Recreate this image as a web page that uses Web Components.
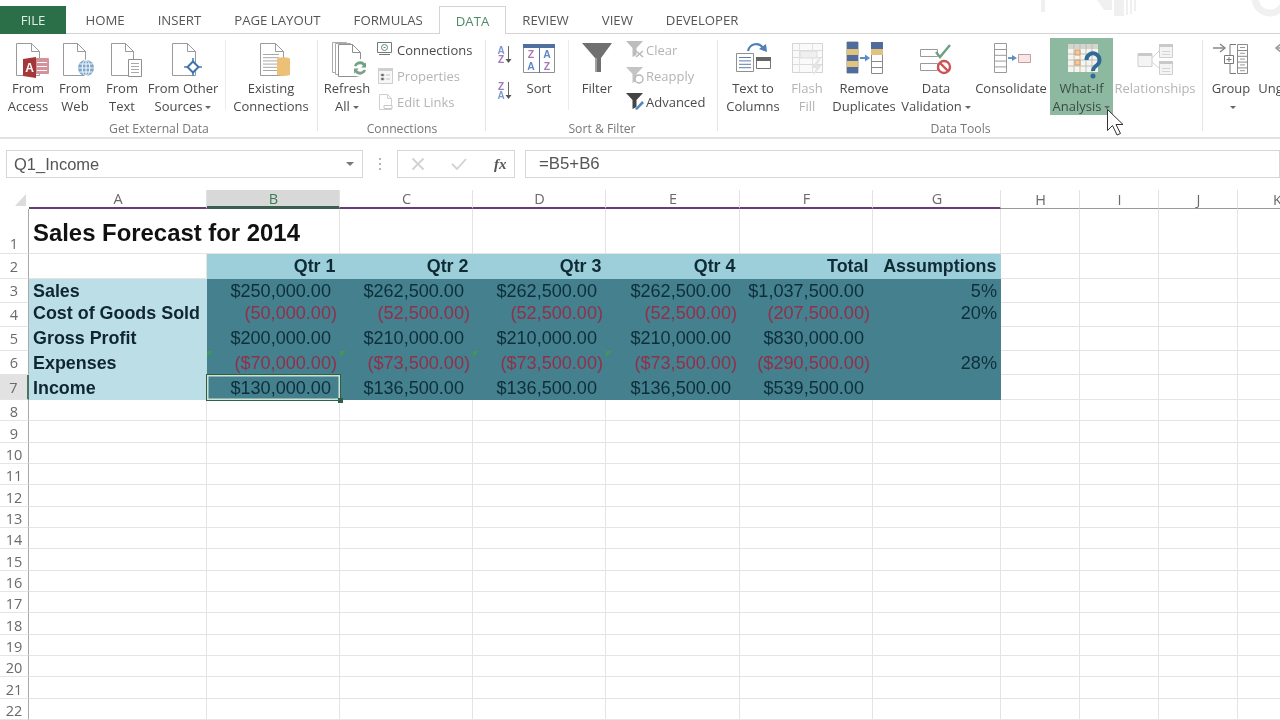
<!DOCTYPE html>
<html>
<head>
<meta charset="utf-8">
<title>Sales Forecast</title>
<style>
  html, body { margin: 0; height: 100%; background: #fff; overflow: hidden; }
</style>
</head>
<body>
<xl-app>
  <xl-tabs></xl-tabs>
  <xl-ribbon>
    <xl-group label="Get External Data" w="318" pad="4">
      <xl-btn icon="access" w="48">From<br>Access</xl-btn>
      <xl-btn icon="web" w="46">From<br>Web</xl-btn>
      <xl-btn icon="text" w="48">From<br>Text</xl-btn>
      <xl-btn icon="other" w="74" caret>From Other<br>Sources</xl-btn>
      <xl-sep w="6" end></xl-sep>
      <xl-btn icon="existing" w="90">Existing<br>Connections</xl-btn>
    </xl-group>
    <xl-group label="Connections" w="168" pad="4">
      <xl-btn icon="refresh" w="50" caret>Refresh<br>All</xl-btn>
      <xl-stack left="4">
        <xl-small icon="conn">Connections</xl-small>
        <xl-small icon="props" disabled>Properties</xl-small>
        <xl-small icon="links" disabled>Edit Links</xl-small>
      </xl-stack>
    </xl-group>
    <xl-group label="Sort &amp; Filter" w="232" pad="4">
      <xl-stack left="0">
        <xl-small icon="az" wide></xl-small>
        <xl-small icon="za" wide></xl-small>
      </xl-stack>
      <xl-btn icon="sort" w="42">Sort</xl-btn>
      <xl-sep w="16"></xl-sep>
      <xl-btn icon="filter" w="42">Filter</xl-btn>
      <xl-stack left="7">
        <xl-small icon="clear" disabled>Clear</xl-small>
        <xl-small icon="reapply" disabled>Reapply</xl-small>
        <xl-small icon="advanced">Advanced</xl-small>
      </xl-stack>
    </xl-group>
    <xl-group label="Data Tools" w="485" pad="5">
      <xl-btn icon="t2c" w="60">Text to<br>Columns</xl-btn>
      <xl-btn icon="flash" w="48" disabled>Flash<br>Fill</xl-btn>
      <xl-btn icon="dupes" w="66">Remove<br>Duplicates</xl-btn>
      <xl-btn icon="valid" w="78" caret>Data<br>Validation</xl-btn>
      <xl-btn icon="consol" w="72">Consolidate</xl-btn>
      <xl-sep w="3" plain></xl-sep>
      <xl-btn icon="whatif" w="63" caret active>What-If<br>Analysis</xl-btn>
      <xl-btn icon="rel" w="84" disabled>Relationships</xl-btn>
    </xl-group>
    <xl-group w="90" pad="4" last>
      <xl-btn icon="group" w="48" caret>Group<br></xl-btn>
      <xl-btn icon="ungroup" w="60" caret>Ungroup<br></xl-btn>
    </xl-group>
  </xl-ribbon>
  <xl-formula-bar name="Q1_Income" formula="=B5+B6"></xl-formula-bar>
  <xl-sheet></xl-sheet>
  <xl-cursor></xl-cursor>
</xl-app>

<script>
const UI_FONT = `"Open Sans", "Noto Sans", sans-serif`;
const CELL_FONT = `"Liberation Sans", Arial, sans-serif`;

// page icon with the folded corner, used all over the first groups
const doc = (x, y, w, h, c = '#9a9a9a', f = 8) =>
  `<path d="M${x} ${y}h${w - f}l${f} ${f}v${h - f}h${-w}z" fill="#fff" stroke="${c}"/>` +
  `<path d="M${x + w - f} ${y}v${f}h${f}" fill="none" stroke="${c}"/>`;

const lines = (x, y, w, n, step, c = '#a8a8a8') => {
  let out = '';
  for (let i = 0; i < n; i++) out += `<path d="M${x} ${y + i * step + .5}h${w}" stroke="${c}"/>`;
  return out;
};

const funnel = (c) => `<path d="M1 1h17l-6.5 7v7l-4 2v-9z" fill="${c}"/>`;

const ICONS = {
  access: doc(10.5, 5.5, 23, 32) +
    `<path d="M29 20h13a1 1 0 0 1 1 1v14a1 1 0 0 1-1 1H29z" fill="#d6929b"/>` +
    lines(31, 24, 10, 3, 4, '#fff') +
    `<path d="M17 21l13-2v21l-13-2z" fill="#a4373a"/>` +
    `<text x="23.5" y="34" font-family="Liberation Sans" font-weight="700" font-size="12" text-anchor="middle" fill="#fff">A</text>`,
  web: doc(10.5, 5.5, 22, 32) +
    `<circle cx="33" cy="30" r="8" fill="#7ea6cb"/>` +
    `<path d="M25 30h16M33 22v16M26.5 26h13M26.5 34h13" stroke="#fff" stroke-width=".9"/>` +
    `<ellipse cx="33" cy="30" rx="3.8" ry="8" fill="none" stroke="#fff" stroke-width=".9"/>`,
  text: doc(11.5, 5.5, 22, 32) +
    `<path d="M28.5 21.5h13v17h-13z" fill="#fff" stroke="#8f8f8f"/>` + lines(31, 25, 8, 4, 3),
  other: doc(11.5, 5.5, 23, 32) +
    `<path d="M32 20v18M23 29h18" stroke="#4f7fb5" stroke-width="1.6"/>` +
    `<path d="M32 23.5l5.5 5.5-5.5 5.5-5.5-5.5z" fill="#fff" stroke="#3f73ad" stroke-width="2"/>`,
  existing: doc(11.5, 5.5, 23, 32) + lines(14, 16, 16, 6, 3.2) +
    `<path d="M28 20.5q6.5-2.5 13 0V37q-6.5 2-13 0z" fill="#ecc177"/>`,
  refresh:
    `<path d="M7.5 4.5h14v30h-14z" fill="#fff" stroke="#aaa"/><path d="M10.5 5.5h15v31h-15z" fill="#fff" stroke="#aaa"/>` +
    doc(13.5, 6.5, 22, 32, '#8f8f8f') +
    `<circle cx="35" cy="30" r="9" fill="#fff"/>` +
    `<path d="M29 28a6.5 6.5 0 0 1 11-2.5l1-1v5h-5l2-1.8a4 4 0 0 0-6.5 .6z" fill="#6fa383"/>` +
    `<path d="M41 32a6.5 6.5 0 0 1-11 2.5l-1 1v-5h5l-2 1.8a4 4 0 0 0 6.5-.6z" fill="#7f9f8d"/>`,
  sort:
    `<path d="M6.5 6.5h31v28h-31z" fill="#fff" stroke="#8f8f8f"/><path d="M6 6h32v4H6zM22 10h1v25h-1z" fill="#4f6f9f"/>` +
    `<g font-family="Liberation Sans" font-size="10.4" font-weight="700" text-anchor="middle">` +
    `<text x="14" y="20" fill="#a777b5">Z</text><text x="30" y="20" fill="#5f86c6">A</text>` +
    `<text x="14" y="32" fill="#5f86c6">A</text><text x="30" y="32" fill="#a777b5">Z</text></g>`,
  filter:
    `<path d="M7 5h30L26 20v14h-6V20z" fill="#707070"/><path d="M20 20h2v14h-2z" fill="#a0a0a0"/>`,
  t2c:
    `<path d="M5.5 15.5h17v18h-17z" fill="#fff" stroke="#8f8f8f"/>` + lines(8, 19, 12, 4, 3.4, '#5d7ea8') +
    `<path d="M25.5 19.5h14v11h-14z" fill="#fff" stroke="#777"/><path d="M25 19h15v4H25z" fill="#666"/>` +
    `<path d="M17 13c2-8 11-9 15-3" fill="none" stroke="#4f80b8" stroke-width="2.2"/><path d="M28 11l8 3-1-8z" fill="#4f80b8"/>`,
  flash:
    `<path d="M7.5 5.5h30v29h-30z" fill="#fafafa" stroke="#d4d4d4"/>` + lines(8, 12, 29, 3, 7, '#dcdcdc') +
    `<path d="M14.5 6v28M27.5 6v28" stroke="#e2e2e2"/>` +
    `<path d="M15 13h17v7H15z" fill="#efefef" stroke="#dcdcdc"/><path d="M34 20l-8 10h5l-3 8 9-11h-5l4-7z" fill="#e4e4e4"/>`,
  dupes:
    `<path d="M5 4h11v31H5z" fill="#fff" stroke="#8a8a8a"/><path d="M5 4h11v7H5zM5 17h11v6H5zM5 29h11v6H5z" fill="#4e6d9e"/>` +
    `<path d="M5 11h11v6H5zM5 23h11v6H5z" fill="#e3c27c"/>` +
    `<path d="M18 20h6" stroke="#5a8ec4" stroke-width="2"/><path d="M23 16.5l5 3.5-5 3.5z" fill="#5a8ec4"/>` +
    `<path d="M29.5 4.5h11v31h-11z" fill="#fff" stroke="#8a8a8a"/><path d="M29 4h12v7H29z" fill="#4e6d9e"/><path d="M29 11h12v6H29z" fill="#e3c27c"/>` +
    lines(30, 23, 10, 2, 6, '#8a8a8a'),
  valid:
    `<path d="M6.5 11.5h17v7h-17zM6.5 25.5h17v7h-17z" fill="#fff" stroke="#9a9a9a"/>` +
    `<path d="M22 14l4 5 10-12" fill="none" stroke="#6f9f82" stroke-width="2.4"/>` +
    `<circle cx="30" cy="29" r="6" fill="#fff" stroke="#cf5252" stroke-width="2.4"/><path d="M26 25l8 8" stroke="#cf5252" stroke-width="2.4"/>`,
  consol:
    `<path d="M5.5 5.5h12v29h-12z" fill="#fff" stroke="#9a9a9a"/>` + lines(6, 11, 11, 4, 5.8, '#9a9a9a') +
    `<path d="M19 20h5" stroke="#5a8ec4" stroke-width="1.8"/><path d="M23 17l5 3-5 3z" fill="#5a8ec4"/>` +
    `<path d="M29.5 16.5h12v8h-12z" fill="#f5e8e8" stroke="#cc9a9a"/>`,
  whatif:
    `<path d="M8 6h30v28H8z" fill="#f6f4ee"/><path d="M8 6h30v5H8z" fill="#d5d5d0"/>` +
    `<path d="M14 6v28M20 6v28M26 6v28M32 6v28M8 16h30M8 22h30M8 28h30" stroke="#aeb8b0" stroke-width=".8"/>` +
    `<path d="M15 12h5v5h-5zM15 22h5v5h-5z" fill="#f3c9a0" stroke="#d79a62"/>` +
    `<path d="M26.5 22a6.5 6.5 0 1 1 10.5 5c-2.5 1.8-4 3-4 6" fill="none" stroke="#2f6b96" stroke-width="4"/>` +
    `<circle cx="33" cy="38" r="2.5" fill="#2f6b96"/>`,
  rel:
    `<path d="M5 15.5h14v13H5zM26.5 6.5h13v13h-13zM26.5 23.5h13v13h-13z" fill="#f4f4f4" stroke="#cfcfcf"/>` +
    `<path d="M5 15h14v3H5zM26 6h14v3H26zM26 23h14v3H26z" fill="#c9c9c9"/>` +
    `<path d="M19 20l7-7M19 24l7 6" stroke="#d4d4d4"/>` + lines(29, 13, 8, 2, 3, '#d4d4d4') + lines(29, 30, 8, 2, 3, '#d4d4d4'),
  group:
    `<path d="M4 10h11" stroke="#888" stroke-width="1.5"/><path d="M11 6l5 4-5 4" fill="none" stroke="#888" stroke-width="1.5"/>` +
    `<path d="M27 6.5h-6v12M21 26v9.5h6" fill="none" stroke="#777"/>` +
    `<path d="M15.5 17.5h9v8h-9z" fill="#fff" stroke="#777"/><path d="M17.5 21.5h5M20 19v5" stroke="#777"/>` +
    `<path d="M28.5 6.5h10v29h-10z" fill="#fff" stroke="#8a8a8a"/>` + lines(29, 12, 9, 4, 5.8, '#8a8a8a') +
    lines(31, 9, 5, 5, 5.8, '#999'),
  ungroup:
    `<path d="M14 10h11" stroke="#999" stroke-width="1.5"/><path d="M18 6l-5 4 5 4" fill="none" stroke="#999" stroke-width="1.5"/>` +
    `<path d="M26 6.5h6v12M32 26v9.5h-6" fill="none" stroke="#888"/>` +
    `<path d="M22.5 17.5h9v8h-9z" fill="#fff" stroke="#c07a7a"/>` +
    `<path d="M34.5 6.5h10v29h-10z" fill="#fff" stroke="#8a8a8a"/>`,
  // small 19x20 icons for the stacked commands
  conn:
    `<path d="M1.5 2.5h14v10h-14z" fill="#fff" stroke="#777"/><path d="M3 14.5h11" stroke="#777"/>` +
    `<circle cx="8.5" cy="7.5" r="3" fill="#fff" stroke="#5a8a70"/><path d="M7.5 7.5h2" stroke="#5a8a70"/>`,
  props:
    `<path d="M2.5 2.5h14v15h-14z" fill="#f7f7f7" stroke="#cdcdcd"/><path d="M2 2h15v3H2z" fill="#cfcfcf"/>` +
    `<path d="M5 8h3v2H5zM5 12h3v2H5zM10 9h4M10 13h4" stroke="#c4c4c4"/>`,
  links: doc(3.5, 2.5, 12, 15, '#cfcfcf', 4) +
    `<path d="M8 13.5h8v3H8z" fill="#fff" stroke="#c8c8c8"/>`,
  az:
    `<g font-family="Liberation Sans" font-size="10" font-weight="700" text-anchor="middle">` +
    `<text x="5" y="9" fill="#7c9ad0">A</text><text x="5" y="18" fill="#a07ab8">Z</text></g>` +
    `<path d="M12.5 1v15" stroke="#666"/><path d="M9.5 14h6l-3 4z" fill="#555"/>`,
  za:
    `<g font-family="Liberation Sans" font-size="10" font-weight="700" text-anchor="middle">` +
    `<text x="5" y="9" fill="#a07ab8">Z</text><text x="5" y="18" fill="#7c9ad0">A</text></g>` +
    `<path d="M12.5 1v15" stroke="#666"/><path d="M9.5 14h6l-3 4z" fill="#555"/>`,
  clear: funnel('#bdbdbd') + `<path d="M11 11l7 6M18 11l-7 6" stroke="#b8b8b8" stroke-width="1.5"/>`,
  reapply: funnel('#c4c4c4') + `<circle cx="14" cy="13" r="4" fill="#fff" stroke="#b4b4b4" stroke-width="1.4"/>`,
  advanced: funnel('#444') + `<path d="M10 17l7-8 2 2-7 7z" fill="#4f86bf"/>`,
};

const svgIcon = (name, w, h) =>
  `<svg width="${w}" height="${h}" viewBox="0 0 ${w} ${h}" xmlns="http://www.w3.org/2000/svg">${ICONS[name] || ''}</svg>`;

const appTemplate = document.createElement('template');
appTemplate.innerHTML = `
  <style>
    :host {
      display: block;
      position: relative;
      width: 1280px;
      height: 720px;
      overflow: hidden;
      background: #fff;
      filter: blur(.35px);
    }
  </style>
  <slot></slot>
`;

class XlApp extends HTMLElement {
  constructor() {
    super();
    this.attachShadow({ mode: 'open' }).appendChild(appTemplate.content.cloneNode(true));
  }
}

const tabsTemplate = document.createElement('template');
tabsTemplate.innerHTML = `
  <style>
    :host {
      display: flex;
      position: relative;
      height: 34px;
      box-sizing: border-box;
      padding-top: 6px;
      border-bottom: 1px solid #d4d4d4;
      font: 13.2px ${UI_FONT};
      color: #555;
    }
    .file {
      width: 66px;
      margin-right: 3px;
      height: 28px;
      background: #2a6f48;
      color: #dfeee5;
      display: flex;
      align-items: center;
      justify-content: center;
    }
    .tab {
      padding: 0 16.5px;
      height: 28px;
      display: flex;
      align-items: center;
      box-sizing: border-box;
    }
    .on {
      background: #fff;
      border: 1px solid #d4d4d4;
      border-bottom: 0;
      color: #4f8a68;
      padding: 0 15.5px;
    }
    .mark { position: absolute; left: 1030px; top: 0; }
  </style>
  <div class="file">FILE</div>
  <div class="tab">HOME</div>
  <div class="tab">INSERT</div>
  <div class="tab">PAGE LAYOUT</div>
  <div class="tab">FORMULAS</div>
  <div class="tab on">DATA</div>
  <div class="tab">REVIEW</div>
  <div class="tab">VIEW</div>
  <div class="tab">DEVELOPER</div>
  <svg class="mark" width="250" height="24" viewBox="0 0 250 24">
    <path d="M11 0h4v12h-4zM67 0h15v10l-8 0zM84 0h10v16H84zM96 0h2v15h-2zM100 0h2v14h-2zM104 0h2v11h-2z" fill="#f0f0f0"/>
    <circle cx="240" cy="-2" r="15" fill="none" stroke="#f0f0f0" stroke-width="7"/>
  </svg>
`;

class XlTabs extends HTMLElement {
  constructor() {
    super();
    this.attachShadow({ mode: 'open' }).appendChild(tabsTemplate.content.cloneNode(true));
  }
}

const ribbonTemplate = document.createElement('template');
ribbonTemplate.innerHTML = `
  <style>
    :host {
      display: flex;
      height: 105px;
      box-sizing: border-box;
      border-bottom: 2px solid #e2e2e2;
      overflow: hidden;
      font: 13px/18px ${UI_FONT};
      color: #4a4a4a;
    }
  </style>
  <slot></slot>
`;

class XlRibbon extends HTMLElement {
  constructor() {
    super();
    this.attachShadow({ mode: 'open' }).appendChild(ribbonTemplate.content.cloneNode(true));
  }
}

class XlGroup extends HTMLElement {
  constructor() {
    super();
    const w = this.getAttribute('w');
    const pad = this.getAttribute('pad') || 0;
    const sepLine = this.hasAttribute('last') ? '' : `
      .sep { position: absolute; right: 0; top: 6px; bottom: 6px; width: 1px; background: #e6e6e6; }`;
    this.attachShadow({ mode: 'open' }).innerHTML = `
      <style>
        :host {
          display: flex;
          flex: none;
          flex-direction: column;
          position: relative;
          width: ${w}px;
          box-sizing: border-box;
          padding: 4px 0 0 ${pad}px;
        }
        .row { display: flex; height: 77px; }
        .label {
          height: 22px;
          margin-left: -${pad}px;
          text-align: center;
          font-size: 12.2px;
          line-height: 28px;
          color: #777;
        }
        ${sepLine}
      </style>
      <div class="row"><slot></slot></div>
      <div class="label">${(this.getAttribute('label') || '').replace('&', '&amp;')}</div>
      <div class="sep"></div>
    `;
  }
}

class XlBtn extends HTMLElement {
  constructor() {
    super();
    const w = this.getAttribute('w');
    const caret = this.hasAttribute('caret') ? '<span class="caret"></span>' : '';
    this.attachShadow({ mode: 'open' }).innerHTML = `
      <style>
        :host {
          display: block;
          flex: none;
          width: ${w}px;
          height: 77px;
          text-align: center;
          white-space: nowrap;
        }
        :host([disabled]) { color: #b4b4b4; }
        :host([active]) { background: #8db9a1; color: #3c4a42; }
        .ico { height: 41px; display: flex; justify-content: center; }
        .ico svg { flex: none; }
        .caret {
          display: inline-block;
          width: 0;
          height: 0;
          margin-left: 3px;
          vertical-align: 2px;
          border: 3px solid transparent;
          border-top-color: #666;
          border-bottom: 0;
        }
      </style>
      <div class="ico">${svgIcon(this.getAttribute('icon'), 44, 41)}</div>
      <div><slot></slot>${caret}</div>
    `;
  }
}

class XlSmall extends HTMLElement {
  constructor() {
    super();
    this.attachShadow({ mode: 'open' }).innerHTML = `
      <style>
        :host {
          display: flex;
          align-items: center;
          height: 26px;
          white-space: nowrap;
        }
        :host([wide]) { width: 28px; height: 36px; box-sizing: border-box; padding-left: 6px; }
        :host([disabled]) { color: #b4b4b4; }
        svg { flex: none; margin-right: 2px; }
      </style>
      ${svgIcon(this.getAttribute('icon'), 19, 20)}<slot></slot>
    `;
  }
}

class XlStack extends HTMLElement {
  constructor() {
    super();
    this.attachShadow({ mode: 'open' }).innerHTML = `
      <style>
        :host {
          display: flex;
          flex: none;
          flex-direction: column;
          margin-top: -1px;
          margin-left: ${this.getAttribute('left') || 0}px;
        }
      </style>
      <slot></slot>
    `;
  }
}

class XlSep extends HTMLElement {
  constructor() {
    super();
    const line = this.hasAttribute('plain') ? 'transparent' : '#ececec';
    const margin = this.hasAttribute('end') ? '2px 0 0 auto' : '2px auto 0';
    this.attachShadow({ mode: 'open' }).innerHTML = `
      <style>
        :host { display: block; flex: none; width: ${this.getAttribute('w')}px; }
        div { width: 1px; height: 70px; margin: ${margin}; background: ${line}; }
      </style>
      <div></div>
    `;
  }
}

const formulaTemplate = document.createElement('template');
formulaTemplate.innerHTML = `
  <style>
    :host {
      display: flex;
      height: 51px;
      box-sizing: border-box;
      padding: 11px 0 12px 6px;
      font: 16.5px ${CELL_FONT};
      color: #555;
    }
    .box {
      box-sizing: border-box;
      height: 28px;
      border: 1px solid #d6d6d6;
      display: flex;
      align-items: center;
      flex: none;
    }
    .name { width: 357px; padding: 0 8px 0 7px; justify-content: space-between; }
    .drop { width: 0; height: 0; border: 4px solid transparent; border-top-color: #777; border-bottom: 0; }
    .dots { width: 34px; flex: none; display: flex; flex-direction: column; align-items: center; justify-content: center; gap: 3px; }
    .dots i { width: 2px; height: 2px; background: #b5b5b5; }
    .btns { width: 118px; padding-left: 12px; gap: 24px; }
    .value { width: 755px; margin-left: 10px; padding-left: 13px; font-size: 16.8px; }
    svg { display: block; flex: none; }
    .fx { font: italic 700 15px "Liberation Serif", serif; color: #555; margin-left: 2px; }
  </style>
  <div class="box name"><span id="name"></span><span class="drop"></span></div>
  <div class="dots"><i></i><i></i><i></i></div>
  <div class="box btns">
    <svg width="16" height="16" viewBox="0 0 16 16"><path d="M2.5 2.5l11 11M13.5 2.5l-11 11" stroke="#d2d2d2" stroke-width="1.8"/></svg>
    <svg width="18" height="16" viewBox="0 0 18 16"><path d="M2 8l5 5 9-10" fill="none" stroke="#d2d2d2" stroke-width="1.8"/></svg>
    <span class="fx">fx</span>
  </div>
  <div class="box value" id="value"></div>
`;

class XlFormulaBar extends HTMLElement {
  constructor() {
    super();
    this._shadowRoot = this.attachShadow({ mode: 'open' });
    this._shadowRoot.appendChild(formulaTemplate.content.cloneNode(true));
  }

  connectedCallback() {
    this._shadowRoot.querySelector('#name').textContent = this.getAttribute('name');
    this._shadowRoot.querySelector('#value').textContent = this.getAttribute('formula');
  }
}

const sheetTemplate = document.createElement('template');
sheetTemplate.innerHTML = `
  <style>
    :host {
      display: block;
      height: 530px;
      overflow: hidden;
      font: 18.1px ${CELL_FONT};
      color: #111;
    }
    .grid {
      display: grid;
      grid-template-columns: 29px 178px 133px 133px 133px 134px 133px 128px 79px 79px 79px 79px;
      grid-template-rows: 19px 45px 25px 24px 24px 24px 24px 25px repeat(15, 21.35px);
    }
    .c {
      box-sizing: border-box;
      border-right: 1px solid #e4e4e4;
      border-bottom: 1px solid #e4e4e4;
      display: flex;
      align-items: center;
      white-space: nowrap;
      position: relative;
      min-width: 0;
    }
    .col, .row {
      font: 14.5px ${UI_FONT};
      color: #6a6a6a;
      justify-content: center;
    }
    .col { border-right-color: #e2e2e2; border-bottom: 1px solid #9a9a9a; padding-left: 1px; line-height: 15px; }
    .col.used { border-bottom: 2px solid #6d3a78; }
    .col.sel { background: #d8d8d8; color: #3d7a5a; border-bottom: 3px solid #3a5f50; line-height: 15px; }
    .corner { border-bottom: 0; border-right: 0; justify-content: flex-end; padding-right: 3px; }
    .row { border-right: 1px solid #a8a8a8; }
    .row.first { align-items: flex-end; }
    .row.low { padding-top: 4px; line-height: 16px; }
    .row.sel { background: #e2e2e2; border-right: 2px solid #4f7361; }
    .title { grid-column: span 2; font-weight: 700; font-size: 23.9px; padding: 3px 0 0 4px; }
    .head { background: #9dcfda; border: 0; font-weight: 700; font-size: 17.9px; justify-content: flex-end; padding-right: 4.5px; color: #0f2c36; }
    .label { background: #bbdee7; border: 0; font-weight: 700; font-size: 17.9px; padding-left: 4px; color: #0f2630; }
    .num { background: #44808e; border: 0; justify-content: flex-end; color: #0e2f3a; padding-right: 9px; }
    .neg { color: #90304a; padding-right: 3px; }
    .pct { padding-right: 4px; }
    .r4 { padding-bottom: 3px; }
    .r5 { padding-bottom: 1px; }
    .r7 { padding-top: 1px; }
    .warn::before {
      content: '';
      position: absolute;
      left: 0;
      top: 0;
      border-top: 6px solid #3d9a55;
      border-right: 6px solid transparent;
    }
    .active {
      z-index: 1;
      box-shadow: 0 0 0 1px #2f6045, inset 0 0 0 1.5px #cfe3d4;
    }
    .active::after {
      content: '';
      position: absolute;
      right: -3px;
      bottom: -3px;
      width: 5px;
      height: 5px;
      background: #2f6045;
    }
  </style>
  <div class="grid"></div>
`;

const COLS = ['A', 'B', 'C', 'D', 'E', 'F', 'G', 'H', 'I', 'J', 'K'];
const DATA = {
  2: ['', 'Qtr 1', 'Qtr 2', 'Qtr 3', 'Qtr 4', 'Total', 'Assumptions'],
  3: ['Sales', '$250,000.00', '$262,500.00', '$262,500.00', '$262,500.00', '$1,037,500.00', '5%'],
  4: ['Cost of Goods Sold', '(50,000.00)', '(52,500.00)', '(52,500.00)', '(52,500.00)', '(207,500.00)', '20%'],
  5: ['Gross Profit', '$200,000.00', '$210,000.00', '$210,000.00', '$210,000.00', '$830,000.00', ''],
  6: ['Expenses', '($70,000.00)', '($73,500.00)', '($73,500.00)', '($73,500.00)', '($290,500.00)', '28%'],
  7: ['Income', '$130,000.00', '$136,500.00', '$136,500.00', '$136,500.00', '$539,500.00', ''],
};

class XlSheet extends HTMLElement {
  constructor() {
    super();
    this._shadowRoot = this.attachShadow({ mode: 'open' });
    this._shadowRoot.appendChild(sheetTemplate.content.cloneNode(true));
    this.$grid = this._shadowRoot.querySelector('.grid');
  }

  connectedCallback() {
    this._cell('c corner', '<svg width="11" height="12"><path d="M11 0v12H0z" fill="#dcdcdc"/></svg>', true);
    COLS.forEach((name, i) => {
      let cls = 'c col';
      if (i < 7) cls += ' used';
      if (name === 'B') cls += ' sel';
      this._cell(cls, name);
    });
    for (let r = 1; r <= 22; r++) this._row(r);
  }

  _row(r) {
    let rowCls = 'c row';
    if (r === 1) rowCls += ' first';
    if (r === 7) rowCls += ' sel';
    if (r > 7) rowCls += ' low';
    this._cell(rowCls, r);

    if (r === 1) {
      this._cell('c title', 'Sales Forecast for 2014');
      for (let i = 2; i < COLS.length; i++) this._cell('c');
      return;
    }
    COLS.forEach((_, i) => {
      const value = DATA[r] ? DATA[r][i] : undefined;
      if (value === undefined) {
        this._cell('c');
      } else if (r === 2) {
        this._cell(i === 0 ? 'c' : 'c head', value);
      } else if (i === 0) {
        this._cell(`c label r${r}`, value);
      } else {
        let cls = `c num r${r}`;
        if (value.startsWith('(')) cls += ' neg';
        if (i === 6) cls += ' pct';
        if (r === 6 && i < 5) cls += ' warn';
        if (r === 7 && i === 1) cls += ' active';
        this._cell(cls, value);
      }
    });
  }

  _cell(cls, content = '', html = false) {
    const el = document.createElement('div');
    el.className = cls;
    if (html) el.innerHTML = content;
    else el.textContent = content;
    this.$grid.appendChild(el);
  }
}

class XlCursor extends HTMLElement {
  constructor() {
    super();
    this.attachShadow({ mode: 'open' }).innerHTML = `
      <style>
        :host { position: absolute; left: 1107px; top: 109px; display: block; width: 18px; height: 27px; }
      </style>
      <svg width="18" height="27" viewBox="0 0 18 27">
        <path d="M.5 .5v21l5-5 4.5 9.5 3.5-1.5-4.5-9h7z" fill="#fff" stroke="#333" stroke-width="1"/>
      </svg>
    `;
  }
}

customElements.define('xl-app', XlApp);
customElements.define('xl-tabs', XlTabs);
customElements.define('xl-ribbon', XlRibbon);
customElements.define('xl-group', XlGroup);
customElements.define('xl-btn', XlBtn);
customElements.define('xl-small', XlSmall);
customElements.define('xl-stack', XlStack);
customElements.define('xl-sep', XlSep);
customElements.define('xl-formula-bar', XlFormulaBar);
customElements.define('xl-sheet', XlSheet);
customElements.define('xl-cursor', XlCursor);
</script>
</body>
</html>
